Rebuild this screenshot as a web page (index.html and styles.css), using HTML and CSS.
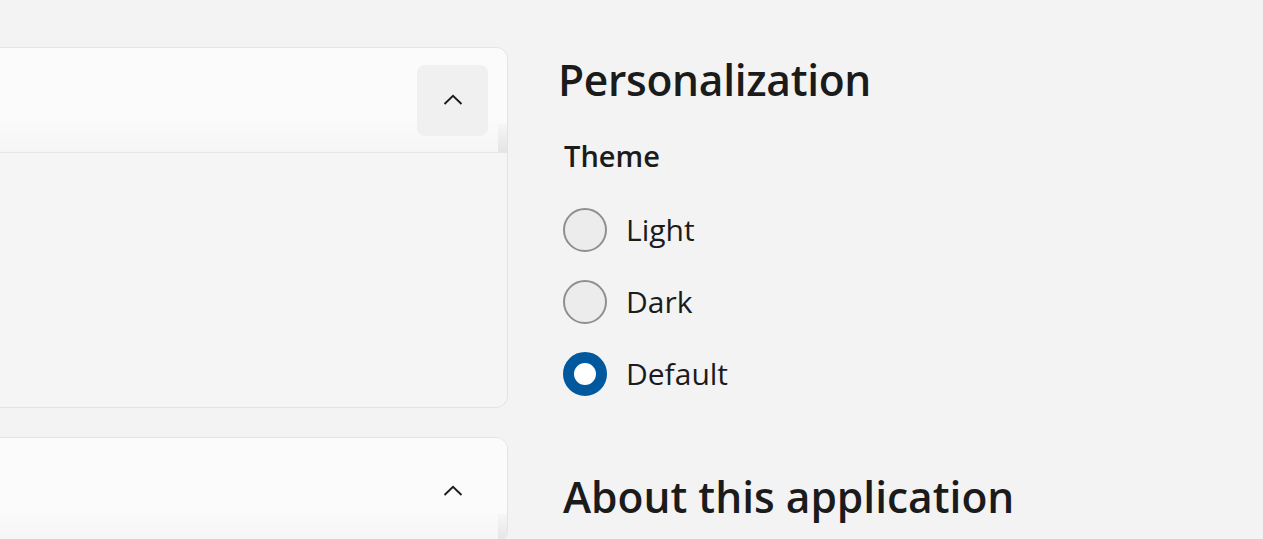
FILE: index.html
```html
<!DOCTYPE html>
<html lang="en">
<head>
<meta charset="utf-8">
<title>Settings</title>
<link rel="stylesheet" href="styles.css">
</head>
<body>
<div class="page">
  <div class="left">
    <section class="card">
      <div class="card-header">
        <button class="chev-btn" aria-label="Collapse">
          <svg width="22" height="14" viewBox="0 0 22 14"><path d="M2.5 11 L11 2.8 L19.5 11" fill="none" stroke="#1b1b1b" stroke-width="1.9"/></svg>
        </button>
      </div>
      <div class="card-body"></div>
    </section>
    <section class="card">
      <div class="card-header plain">
        <span class="chev-plain">
          <svg width="22" height="14" viewBox="0 0 22 14"><path d="M2.5 11 L11 2.8 L19.5 11" fill="none" stroke="#1b1b1b" stroke-width="1.9"/></svg>
        </span>
      </div>
    </section>
  </div>
  <div class="right">
    <h1 class="title">Personalization</h1>
    <h2 class="subtitle">Theme</h2>
    <div class="radios">
      <label class="radio"><span class="dot"></span><span class="label">Light</span></label>
      <label class="radio"><span class="dot"></span><span class="label">Dark</span></label>
      <label class="radio"><span class="dot checked"></span><span class="label">Default</span></label>
    </div>
    <h1 class="title about">About this application</h1>
  </div>
</div>
</body>
</html>
```
FILE: styles.css
```css
html, body {
  margin: 0;
  padding: 0;
  background: #f3f3f3;
  height: 539px;
  overflow: hidden;
  font-family: "Open Sans", "Noto Sans", sans-serif;
  color: #1b1b1b;
}
.page {
  display: flex;
  padding-top: 47px;
}
.left {
  margin-left: -100px;
  width: 608px;
  display: flex;
  flex-direction: column;
  gap: 29px;
  flex: none;
}
.card {
  border: 1px solid #e3e3e3;
  border-radius: 12px;
  background: #f5f5f5;
  overflow: hidden;
}
.card-header {
  position: relative;
  height: 104px;
  background: linear-gradient(to bottom, #fbfbfb 0%, #fbfbfb 68%, #f5f5f5 100%);
  border-bottom: 1px solid #e6e6e6;
  display: flex;
  align-items: center;
  justify-content: flex-end;
  padding-right: 19px;
}
.card-header::after {
  content: "";
  position: absolute;
  right: 0;
  bottom: 0;
  width: 9px;
  height: 28px;
  background: linear-gradient(to bottom, #f6f6f6, #e4e4e4);
}
.card-header.plain {
  border-bottom: none;
}
.chev-btn {
  width: 71px;
  height: 71px;
  border: none;
  border-radius: 8px;
  background: #f0f0f0;
  display: flex;
  align-items: center;
  justify-content: center;
  padding: 0;
  margin-top: 0;
}
.chev-plain {
  width: 71px;
  height: 71px;
  display: flex;
  align-items: center;
  justify-content: center;
  margin-top: 2px;
}
.card-body {
  height: 254px;
}
.right {
  margin-left: 50px;
  display: flex;
  flex-direction: column;
}
.title {
  margin: 0;
  font-size: 42.5px;
  font-weight: 600;
  line-height: 60px;
  margin-top: 3px;
  letter-spacing: -0.3px;
}
.subtitle {
  margin: 26px 0 0 6px;
  font-size: 29px;
  font-weight: 600;
  line-height: 40px;
}
.radios {
  display: flex;
  flex-direction: column;
  gap: 28px;
  margin: 32px 0 0 5px;
}
.radio {
  display: flex;
  align-items: center;
  gap: 19px;
  height: 44px;
}
.dot {
  width: 40px;
  height: 40px;
  border: 2px solid #8f8f8f;
  border-radius: 50%;
  background: #ececec;
  flex: none;
}
.dot.checked {
  width: 22px;
  height: 22px;
  border: 11px solid #00599f;
  background: #ffffff;
}
.label {
  font-size: 30px;
  line-height: 40px;
}
.title.about {
  margin-top: 71px;
  margin-left: 5px;
  letter-spacing: 0;
}
```
